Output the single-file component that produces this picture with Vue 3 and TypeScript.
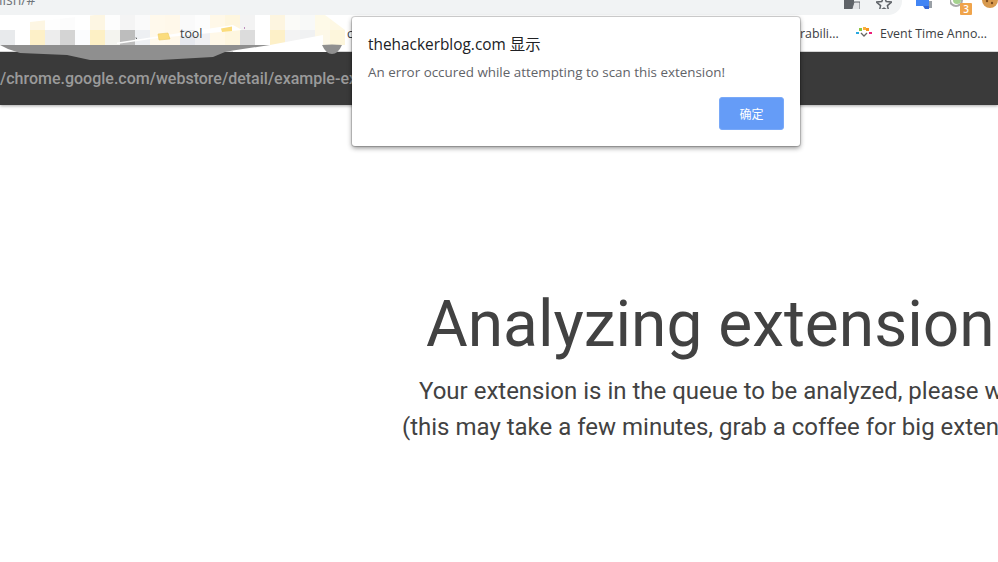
<template>
  <div class="page">
    <div class="toolbar">
      <div class="omnibox">
        <span class="url">lish/#</span>
        <div class="omni-icons">
          <svg class="icon" width="16" height="16" viewBox="0 0 16 16">
            <rect x="0" y="0" width="10" height="9" fill="#5f6368" />
            <path d="M10 2h6v10H7z" fill="#e4e5e7" stroke="#5f6368" />
          </svg>
          <svg class="icon" width="16" height="16" viewBox="0 0 16 16">
            <path d="M8 -4l2.200 5.500 5.400 .5-4.200 3.600 1.300 5.400L8 8.200l-4.700 2.800 1.300-5.400-4.200-3.600 5.400-.5z" fill="none" stroke="#5f6368" stroke-width="1.500" />
          </svg>
        </div>
      </div>
      <div class="extensions">
        <svg class="icon" width="18" height="10" viewBox="0 0 18 10">
          <rect x="0" y="0" width="13" height="6" fill="#4285f4" />
          <path d="M7 6h6v3H9z" fill="#3367d6" />
          <path d="M13 1h3v7h-3z" fill="#9aa0a6" />
        </svg>
        <div class="profile">
          <svg class="icon" width="14" height="10" viewBox="0 0 14 10">
            <circle cx="6" cy="0" r="6" fill="none" stroke="#a9a9a9" stroke-width="2" />
            <circle cx="7" cy="0" r="4" fill="#a5d28f" />
          </svg>
          <span class="badge">3</span>
        </div>
        <svg class="icon" width="16" height="9" viewBox="0 0 16 9">
          <circle cx="8" cy="0" r="8" fill="#d89a4e" />
          <circle cx="5" cy="1" r="1.200" fill="#7b4a1e" />
          <circle cx="10" cy="3" r="1.200" fill="#7b4a1e" />
          <circle cx="11" cy="-1" r="1" fill="#d0432f" />
        </svg>
      </div>
    </div>

    <div class="bookmarks">
      <div class="mosaic">
        <template v-for="(col, i) in mosaic" :key="i">
          <span :style="{ background: col[0] }"></span>
          <span :style="{ background: col[1] }"></span>
        </template>
      </div>
      <svg class="scribble" width="360" height="46" viewBox="0 15 360 46">
        <path d="M0 15H95L30 22L0 30z" fill="#fff" />
        <path d="M325 15H345V30z" fill="#fff" />
        <path d="M117 42.500L233 25L242 30L158 38L117 44z" fill="#fff" />
        <path d="M233 50.500L270 45L323 35L323 45L330 52L233 52z" fill="#fff" />
        <path d="M0 45L270 45L233 50.500L225 52L213 57L160 60L90 60L67 55L20 53L8 49z" fill="#8f8f8f" />
        <path d="M322 45Q332 44 342 45Q338 54 332 54Q326 54 322 45z" fill="#8f8f8f" />
        <path d="M158 34L168 33L170 39L159 40z" fill="#fbdc7c" stroke="#eecb63" stroke-width=".6" />
        <path d="M221 28.500L232 26.500L232 31L222 32z" fill="#fbdc7c" />
        <path d="M136 37.500l.6 1.500" stroke="#555" fill="none" />
        <rect x="244" y="27.500" width="1" height="1" fill="#8a2f8a" />
      </svg>
      <span class="mark mark-tool">tool</span>
      <span class="mark mark-cut">c</span>
      <span class="mark mark-rabili">rabili...</span>
      <svg class="spark" width="16" height="12" viewBox="0 0 16 12">
        <rect x="0" y="5" width="3" height="2" fill="#29a9e0" />
        <rect x="3" y="1" width="3" height="3" fill="#8dc63f" />
        <rect x="7" y="0" width="3" height="3" fill="#fbb03b" />
        <rect x="10" y="1" width="3" height="3" fill="#f7931e" />
        <rect x="13" y="5" width="3" height="2" fill="#ec1e79" />
        <path d="M5 6l3 3 3-3" fill="none" stroke="#666" stroke-width="1.300" />
      </svg>
      <span class="mark mark-event">Event Time Anno...</span>
    </div>

    <div class="appbar">
      <span class="applink">/chrome.google.com/webstore/detail/example-extension</span>
    </div>

    <main class="status">
      <h1 class="status-title">Analyzing extension</h1>
      <p class="status-line line-one">Your extension is in the queue to be analyzed, please wait</p>
      <p class="status-line line-two">(this may take a few minutes, grab a coffee for big extensions!)</p>
    </main>

    <div class="dialog">
      <div class="dialog-title">thehackerblog.com 显示</div>
      <div class="dialog-msg">An error occured while attempting to scan this extension!</div>
      <div class="dialog-actions">
        <button class="dialog-btn">确定</button>
      </div>
    </div>
  </div>
</template>

<script setup lang="ts">
// redacted bookmark strip: [top, bottom] colour for each 15px column
const mosaic: [string, string][] = [
  ['#ffffff', '#e8eaec'],
  ['#ffffff', '#ffffff'],
  ['#fdf6e3', '#fdf0c8'],
  ['#fefefe', '#ededed'],
  ['#fcfcfc', '#d4d4d4'],
  ['#ffffff', '#fbfcfe'],
  ['#fdf6e3', '#fdf0c5'],
  ['#fdfdfd', '#f4f4ef'],
  ['#f4f4f4', '#bdbdbd'],
  ['#fafafa', '#eef0f3'],
  ['#fff9ec', '#fff9ec'],
  ['#fff8ea', '#fff8ea'],
  ['#fafafa', '#e6e8ee'],
  ['#fdfdfd', '#f0f0f3'],
  ['#fff8e8', '#fff8e8'],
  ['#fef6df', '#fef6df'],
  ['#f3f3f3', '#dcdcdc'],
  ['#ffffff', '#ffffff'],
  ['#fdf5e0', '#fdf0c8'],
  ['#fbfbf8', '#f3f3f3'],
  ['#f8f9f8', '#f0f1f2'],
  ['#fefae8', '#fdf8e8'],
  ['#fef8e4', '#fdf6dc'],
]
</script>

<style>
html,
body {
  margin: 0;
  background: #fff;
  overflow: hidden;
}
</style>

<style scoped>
.page {
  position: relative;
  width: 998px;
  height: 562px;
  overflow: hidden;
  background: #fff;
  font-family: "Open Sans", "Noto Sans CJK SC", sans-serif;
}

.toolbar {
  display: flex;
  height: 15px;
  background: #fff;
}

.omnibox {
  width: 903px;
  height: 15px;
  background: #f1f3f4;
  border-bottom-right-radius: 14px;
  display: flex;
  justify-content: space-between;
  overflow: hidden;
}

.url {
  margin-top: -10px;
  font-size: 14px;
  line-height: 20px;
  color: #70757a;
  margin-left: -1px;
}

.omni-icons {
  display: flex;
  gap: 16px;
  margin-right: 10px;
  height: 9px;
  overflow: hidden;
}

.icon {
  display: block;
  flex: none;
}

.extensions {
  display: flex;
  flex: 1;
  gap: 15px;
  padding-left: 14px;
  align-items: flex-start;
}

.profile {
  position: relative;
  width: 14px;
  margin-left: 1px;
  margin-right: 3px;
}

.badge {
  position: absolute;
  left: 10px;
  top: 3px;
  width: 12px;
  height: 12px;
  background: #f0a44b;
  border-radius: 1px;
  color: #fff;
  font-size: 10px;
  line-height: 12px;
  text-align: center;
  font-weight: 600;
}

.bookmarks {
  position: relative;
  height: 36px;
  background: #fff;
  border-bottom: 1px solid #d5d5d5;
  display: flex;
  align-items: center;
}

.mosaic {
  position: absolute;
  left: 0;
  top: 0;
  display: grid;
  grid-auto-flow: column;
  grid-template-rows: 15px 15px;
  grid-auto-columns: 15px;
}

.scribble {
  position: absolute;
  left: 0;
  top: 0;
}

.mark {
  position: absolute;
  top: 10px;
  font-size: 12.4px;
  line-height: 17px;
  color: #3c4043;
  white-space: nowrap;
}

.mark-tool {
  left: 180px;
}

.mark-cut {
  left: 347px;
}

.mark-rabili {
  left: 800px;
}

.mark-event {
  left: 880px;
}

.spark {
  position: absolute;
  left: 856px;
  top: 12px;
}

.appbar {
  height: 53px;
  background: #3a3a3a;
  box-shadow: 0 1px 3px rgba(0, 0, 0, 0.35);
  display: flex;
  align-items: center;
  overflow: hidden;
  white-space: nowrap;
}

.applink {
  color: #9a9a9a;
  font-family: Roboto, sans-serif;
  font-size: 16px;
  font-weight: 500;
}

.status {
  padding-top: 181px;
  font-family: Roboto, sans-serif;
  color: #424242;
}

.status-title {
  margin: 0 0 9px 426px;
  font-size: 64px;
  line-height: 78px;
  font-weight: 400;
  white-space: nowrap;
}

.status-line {
  margin: 0;
  font-size: 24px;
  line-height: 36px;
  white-space: nowrap;
}

.line-one {
  margin-left: 419px;
}

.line-two {
  margin-left: 402px;
}

.dialog {
  position: absolute;
  left: 352px;
  top: 17px;
  width: 448px;
  height: 129px;
  box-sizing: border-box;
  padding: 17px 16px 0;
  background: #fff;
  border-radius: 3px;
  box-shadow: 0 0 0 1px rgba(0, 0, 0, 0.15), 0 2px 5px rgba(0, 0, 0, 0.45);
}

.dialog-title {
  font-size: 15.4px;
  line-height: 21px;
  color: #202124;
}

.dialog-msg {
  margin-top: 8px;
  font-size: 13.4px;
  line-height: 18px;
  color: #5f6368;
}

.dialog-actions {
  display: flex;
  justify-content: flex-end;
  margin-top: 16px;
}

.dialog-btn {
  width: 65px;
  height: 33px;
  border: 1px solid #79a9f8;
  border-radius: 3px;
  background: #659cf7;
  color: #fff;
  font-family: "Noto Sans CJK SC", sans-serif;
  font-size: 12px;
  padding: 0;
}
</style>
